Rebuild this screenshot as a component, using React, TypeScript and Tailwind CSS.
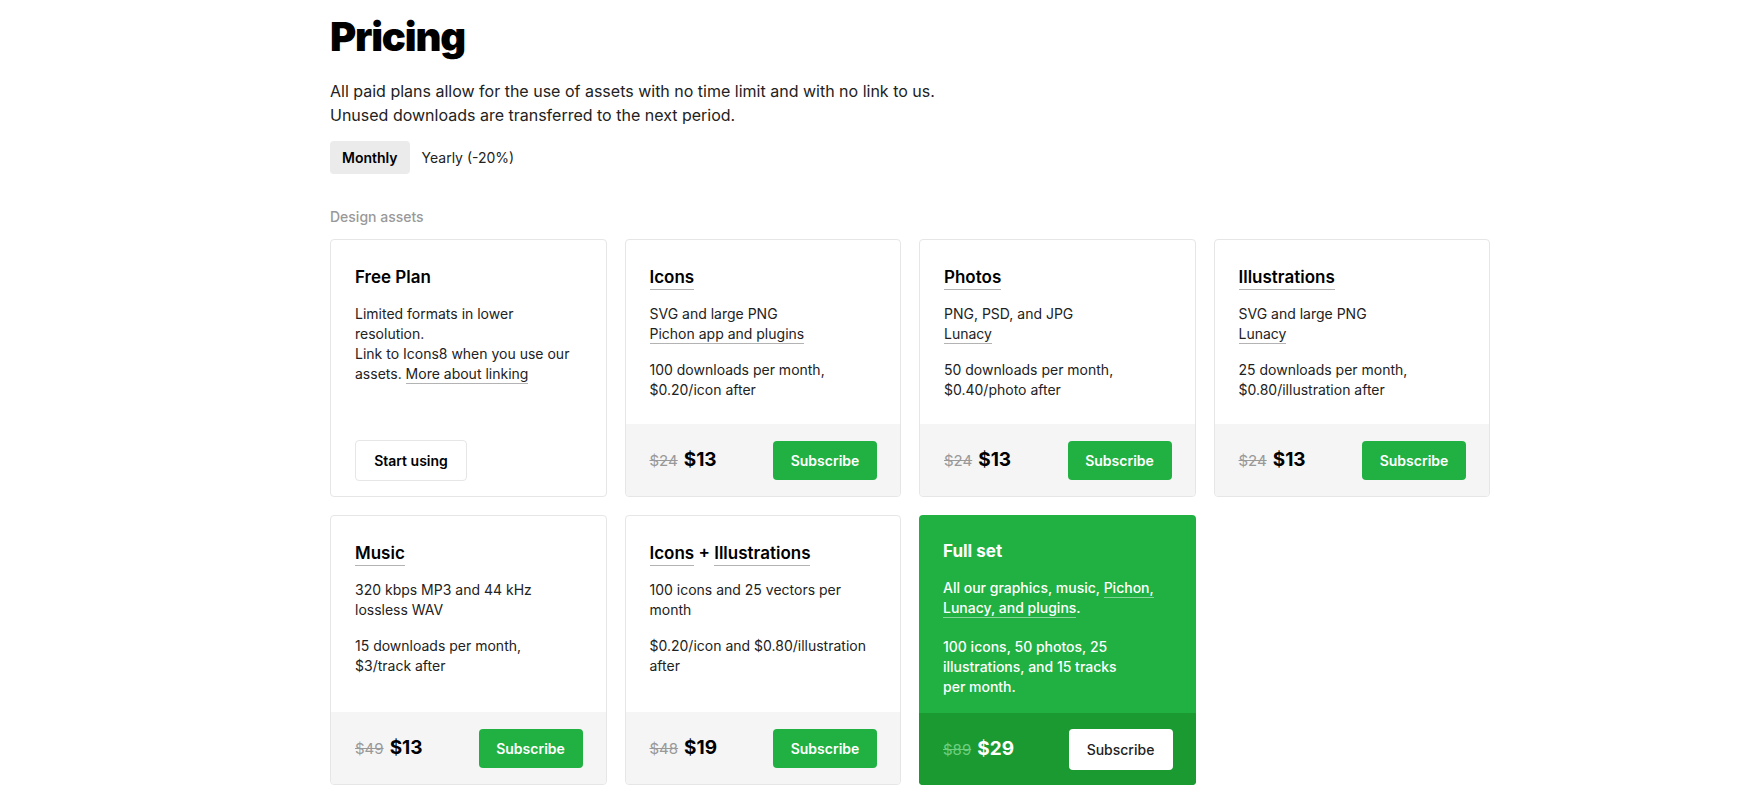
const font = { fontFamily: "Inter, 'Noto Sans', sans-serif" };

function Link({ children, light }: { children: React.ReactNode; light?: boolean }) {
  return (
    <span
      className={
        light
          ? "border-b border-[rgba(255,255,255,0.45)] pb-[1px]"
          : "border-b border-[#b3b3b3] pb-[1px]"
      }
    >
      {children}
    </span>
  );
}

function Title({ children }: { children: React.ReactNode }) {
  return (
    <h3 className="text-[17px] leading-[26px] font-semibold text-black">{children}</h3>
  );
}

function UTitle({ children }: { children: React.ReactNode }) {
  return <span className="border-b border-[#b3b3b3] pb-[2px]">{children}</span>;
}

function Footer({ old, price }: { old: string; price: string }) {
  return (
    <div className="h-[72px] bg-[#f5f5f5] pl-[24px] pr-[23px] flex items-center justify-between">
      <div className="flex items-baseline gap-[6px]">
        <span className="text-[15px] text-[#999] line-through">{old}</span>
        <span className="text-[19px] font-bold text-black">{price}</span>
      </div>
      <button className="w-[104px] h-[39px] rounded-[4px] bg-[#21b142] text-white text-[14px] font-semibold">
        Subscribe
      </button>
    </div>
  );
}

function Card({
  title,
  first,
  second,
  old,
  price,
}: {
  title: React.ReactNode;
  first: React.ReactNode;
  second: React.ReactNode;
  old: string;
  price: string;
}) {
  return (
    <div className="rounded-[4px] border border-[#e6e6e6] flex flex-col overflow-hidden bg-white">
      <div className="flex-1 px-[24px] pt-[24px] pb-[24px]">
        <Title>{title}</Title>
        <p className="mt-[14px] text-[14px] leading-[20px] text-[#222]">{first}</p>
        <p className="mt-[16px] text-[14px] leading-[20px] text-[#222]">{second}</p>
      </div>
      <Footer old={old} price={price} />
    </div>
  );
}

export default function App() {
  return (
    <div className="min-h-screen bg-white text-[#222]" style={font}>
      <div className="pl-[330px] pt-[17px] w-[1490px] box-content">
        <h1 className="text-[40px] leading-[40px] font-black text-black tracking-[-1.2px]">
          Pricing
        </h1>
        <p className="mt-[22px] text-[16px] leading-[24px] text-[#222]">
          All paid plans allow for the use of assets with no time limit and with no link to us.
          <br />
          Unused downloads are transferred to the next period.
        </p>
        <div className="mt-[14px] flex items-center">
          <button className="h-[33px] px-[12px] rounded-[4px] bg-[#ebebeb] text-[14px] font-semibold text-black">
            Monthly
          </button>
          <button className="h-[33px] px-[12px] text-[14px] text-[#222]">Yearly (-20%)</button>
        </div>
        <div className="mt-[33px] text-[14px] leading-[20px] font-medium text-[#999]">
          Design assets
        </div>
        <div className="mt-[12px] w-[1160px] grid grid-cols-4 gap-[18px]">
          <div className="rounded-[4px] border border-[#e6e6e6] flex flex-col overflow-hidden bg-white">
            <div className="flex-1 px-[24px] pt-[24px] pb-[24px]">
              <Title>Free Plan</Title>
              <p className="mt-[14px] text-[14px] leading-[20px] text-[#222]">
                Limited formats in lower
                <br />
                resolution.
                <br />
                Link to Icons8 when you use our
                <br />
                assets. <Link>More about linking</Link>
              </p>
            </div>
            <div className="h-[72px] px-[24px] flex items-center">
              <button className="w-[112px] h-[41px] rounded-[4px] border border-[#e6e6e6] bg-white text-[14px] font-semibold text-black">
                Start using
              </button>
            </div>
          </div>

          <Card
            title={<UTitle>Icons</UTitle>}
            first={
              <>
                SVG and large PNG
                <br />
                <Link>Pichon app and plugins</Link>
              </>
            }
            second={
              <>
                100 downloads per month,
                <br />
                $0.20/icon after
              </>
            }
            old="$24"
            price="$13"
          />
          <Card
            title={<UTitle>Photos</UTitle>}
            first={
              <>
                PNG, PSD, and JPG
                <br />
                <Link>Lunacy</Link>
              </>
            }
            second={
              <>
                50 downloads per month,
                <br />
                $0.40/photo after
              </>
            }
            old="$24"
            price="$13"
          />
          <Card
            title={<UTitle>Illustrations</UTitle>}
            first={
              <>
                SVG and large PNG
                <br />
                <Link>Lunacy</Link>
              </>
            }
            second={
              <>
                25 downloads per month,
                <br />
                $0.80/illustration after
              </>
            }
            old="$24"
            price="$13"
          />

          <Card
            title={<UTitle>Music</UTitle>}
            first={
              <>
                320 kbps MP3 and 44 kHz
                <br />
                lossless WAV
              </>
            }
            second={
              <>
                15 downloads per month,
                <br />
                $3/track after
              </>
            }
            old="$49"
            price="$13"
          />
          <Card
            title={
              <>
                <UTitle>Icons</UTitle> + <UTitle>Illustrations</UTitle>
              </>
            }
            first={
              <>
                100 icons and 25 vectors per
                <br />
                month
              </>
            }
            second={
              <>
                $0.20/icon and $0.80/illustration
                <br />
                after
              </>
            }
            old="$48"
            price="$19"
          />

          <div className="rounded-[4px] flex flex-col overflow-hidden bg-[#20b142] text-white">
            <div className="flex-1 px-[24px] pt-[23px] pb-[16px]">
              <h3 className="text-[17px] leading-[26px] font-bold text-white">Full set</h3>
              <p className="mt-[14px] text-[14px] leading-[20px] font-medium">
                All our graphics, music, <Link light>Pichon,</Link>
                <br />
                <Link light>Lunacy, and plugins</Link>.
              </p>
              <p className="mt-[19px] text-[14px] leading-[20px] font-medium">
                100 icons, 50 photos, 25
                <br />
                illustrations, and 15 tracks
                <br />
                per month.
              </p>
            </div>
            <div className="h-[72px] bg-[#1a9a30] pl-[24px] pr-[23px] flex items-center justify-between">
              <div className="flex items-baseline gap-[6px]">
                <span className="text-[15px] text-[#6fcf80] line-through">$89</span>
                <span className="text-[19px] font-bold text-white">$29</span>
              </div>
              <button className="w-[104px] h-[41px] rounded-[4px] bg-white text-[#222] text-[14px] font-medium">
                Subscribe
              </button>
            </div>
          </div>
        </div>
        <div className="h-[24px]" />
      </div>
    </div>
  );
}
